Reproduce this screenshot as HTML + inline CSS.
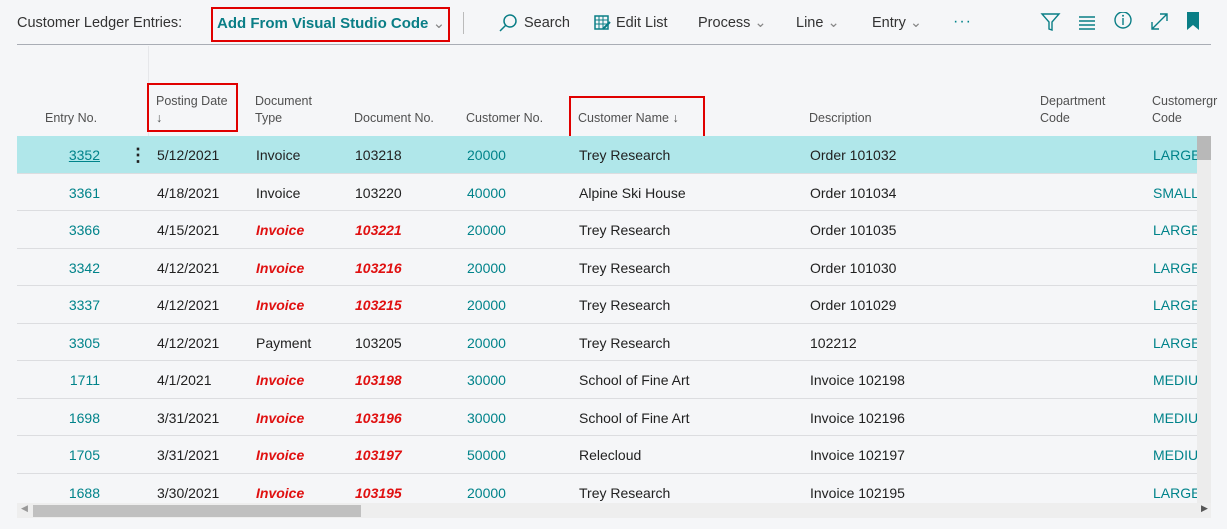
<!DOCTYPE html>
<html><head><meta charset="utf-8"><style>
*{margin:0;padding:0;box-sizing:border-box}
body{width:1227px;height:529px;background:#f5f6f8;font-family:"Liberation Sans",sans-serif;color:#212121;position:relative;overflow:hidden;font-size:14px}
.a{position:absolute;white-space:nowrap}
.hd{color:#505050;font-size:12.5px;line-height:17px}
.t{color:#00838a}
.r{color:#e01010;font-weight:bold;font-style:italic}
.row{position:absolute;left:17px;width:1180px;height:37.5px;border-bottom:1px solid #dcdde0}
.red{position:absolute;border:2px solid #e00000}
</style></head><body>
<div class="a" style="left:17px;top:15px;font-size:14.5px;color:#333">Customer Ledger Entries:</div>
<div class="a t" style="left:217px;top:14px;font-size:15px;font-weight:bold;color:#0a7e86">Add From Visual Studio Code <span style="font-weight:normal;color:#888">&#8964;</span></div>
<div class="red" style="left:211px;top:7px;width:239px;height:35px"></div>
<div class="a" style="left:463px;top:12px;width:1px;height:22px;background:#bbb"></div>
<svg class="a" style="left:498px;top:13px" width="20" height="20"><circle cx="12" cy="8" r="6" fill="none" stroke="#0a7e86" stroke-width="1.5"/><line x1="8" y1="12" x2="2" y2="18" stroke="#0a7e86" stroke-width="1.5"/></svg>
<div class="a" style="left:524px;top:15px;font-size:14.5px;color:#333">Search</div>
<svg class="a" style="left:594px;top:15px" width="18" height="16"><rect x="1" y="1" width="13" height="13" fill="none" stroke="#0a7e86" stroke-width="1.5"/><path d="M1 5H14M1 9H14M5 1V14M9 1V14" stroke="#0a7e86"/><path d="M9 14L16 7" stroke="#0a7e86" stroke-width="2"/></svg>
<div class="a" style="left:616px;top:15px;font-size:14.5px;color:#333">Edit List</div>
<div class="a" style="left:698px;top:15px;font-size:14.5px;color:#333">Process <span style="color:#888">&#8964;</span></div>
<div class="a" style="left:796px;top:15px;font-size:14.5px;color:#333">Line <span style="color:#888">&#8964;</span></div>
<div class="a" style="left:872px;top:15px;font-size:14.5px;color:#333">Entry <span style="color:#888">&#8964;</span></div>
<div class="a t" style="left:953px;top:13px;font-size:16px;letter-spacing:1px">···</div>
<svg class="a" style="left:1040px;top:12px" width="180" height="20">
<path d="M2 2H19L12 10V18L9 17V10Z" fill="none" stroke="#0a7e86" stroke-width="1.4"/>
<path d="M39 5H55M39 9H55M39 13H55M39 17H55" stroke="#0a7e86" stroke-width="1.5"/>
<circle cx="83" cy="8" r="8" fill="none" stroke="#0a7e86" stroke-width="1.4"/><path d="M83 6V13" stroke="#0a7e86" stroke-width="1.4"/><circle cx="83" cy="3.8" r="1" fill="#0a7e86"/>
<path d="M112 17L127 2M120 2H127V9M112 10V17H119" fill="none" stroke="#0a7e86" stroke-width="1.4"/>
<path d="M147 0H159V18L153 13L147 18Z" fill="#0a7e86"/>
</svg>
<div class="a" style="left:17px;top:44px;width:1194px;height:1px;background:#a9adb5"></div>
<div class="a" style="left:148px;top:46px;width:1px;height:90px;background:#e6e7ea"></div>
<div class="a hd" style="left:45px;top:110px">Entry No.</div>
<div class="a hd" style="left:156px;top:93px">Posting Date<br>&#8595;</div>
<div class="red" style="left:147px;top:83px;width:91px;height:49px"></div>
<div class="a hd" style="left:255px;top:93px">Document<br>Type</div>
<div class="a hd" style="left:354px;top:110px">Document No.</div>
<div class="a hd" style="left:466px;top:110px">Customer No.</div>
<div class="a hd" style="left:578px;top:110px">Customer Name &#8595;</div>
<div class="red" style="left:569px;top:96px;width:136px;height:43px"></div>
<div class="a hd" style="left:809px;top:110px">Description</div>
<div class="a hd" style="left:1040px;top:93px">Department<br>Code</div>
<div class="a hd" style="left:1152px;top:93px">Customergr<br>Code</div>
<div class="row" style="top:136px;background:#b0e7ea"></div>
<div class="row" style="top:173.5px"></div><div class="row" style="top:211px"></div><div class="row" style="top:248.5px"></div><div class="row" style="top:286px"></div><div class="row" style="top:323.5px"></div><div class="row" style="top:361px"></div><div class="row" style="top:398.5px"></div><div class="row" style="top:436px"></div>
<div class="a" style="left:129px;top:146px;font-size:18px;font-weight:bold;line-height:18px">&#8942;</div>
<div id="rows"></div>
<script>
var d=[["3352","5/12/2021","Invoice","103218","20000","Trey Research","Order 101032","LARGE",0],
["3361","4/18/2021","Invoice","103220","40000","Alpine Ski House","Order 101034","SMALL",0],
["3366","4/15/2021","Invoice","103221","20000","Trey Research","Order 101035","LARGE",1],
["3342","4/12/2021","Invoice","103216","20000","Trey Research","Order 101030","LARGE",1],
["3337","4/12/2021","Invoice","103215","20000","Trey Research","Order 101029","LARGE",1],
["3305","4/12/2021","Payment","103205","20000","Trey Research","102212","LARGE",0],
["1711","4/1/2021","Invoice","103198","30000","School of Fine Art","Invoice 102198","MEDIU",1],
["1698","3/31/2021","Invoice","103196","30000","School of Fine Art","Invoice 102196","MEDIU",1],
["1705","3/31/2021","Invoice","103197","50000","Relecloud","Invoice 102197","MEDIU",1],
["1688","3/30/2021","Invoice","103195","20000","Trey Research","Invoice 102195","LARGE",1]];
var h="";
d.forEach(function(r,i){var y=147+i*37.5;var c=r[8]?' r':'';
h+='<div class="a t" style="right:1127px;top:'+y+'px;'+(i==0?'text-decoration:underline':'')+'">'+r[0]+'</div>'+
'<div class="a" style="left:157px;top:'+y+'px">'+r[1]+'</div>'+
'<div class="a'+c+'" style="left:256px;top:'+y+'px">'+r[2]+'</div>'+
'<div class="a'+c+'" style="left:355px;top:'+y+'px">'+r[3]+'</div>'+
'<div class="a t" style="left:467px;top:'+y+'px">'+r[4]+'</div>'+
'<div class="a" style="left:579px;top:'+y+'px">'+r[5]+'</div>'+
'<div class="a" style="left:810px;top:'+y+'px">'+r[6]+'</div>'+
'<div class="a t" style="left:1153px;top:'+y+'px;width:44px;overflow:hidden">'+r[7]+'</div>';});
document.getElementById("rows").innerHTML=h;
</script>
<div class="a" style="left:1197px;top:136px;width:14px;height:367px;background:#ececec"></div>
<div class="a" style="left:1197px;top:136px;width:14px;height:24px;background:#b8b8b8"></div>
<div class="a" style="left:17px;top:503px;width:1194px;height:15px;background:#eeeeee"></div>
<div class="a" style="left:33px;top:505px;width:328px;height:12px;background:#c0c0c0"></div>
<div class="a" style="left:21px;top:503px;font-size:9px;color:#999">&#9664;</div>
<div class="a" style="left:1201px;top:503px;font-size:9px;color:#555">&#9654;</div>
</body></html>
